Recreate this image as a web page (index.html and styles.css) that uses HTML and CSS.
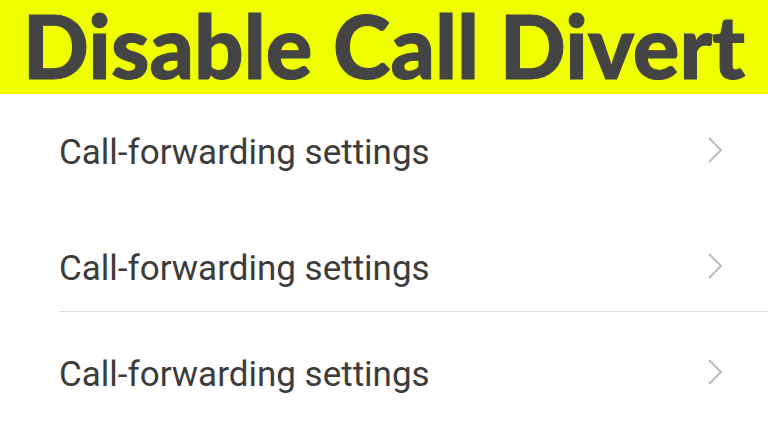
FILE: index.html
```html
<!DOCTYPE html>
<html lang="en">
<head>
    <meta charset="UTF-8">
    <meta name="viewport" content="width=device-width, initial-scale=1.0">
    <title>Disable Call Divert</title>
    <link rel="stylesheet" href="styles.css">
</head>
<body>
    <header class="banner">
        <h1>Disable Call Divert</h1>
    </header>
    <main class="settings">
        <a class="row row-first" href="#voice">
            <span>Call-forwarding settings</span>
            <svg class="chevron" viewBox="0 0 16 28" aria-hidden="true"><path d="M2 2 14 14 2 26"/></svg>
        </a>
        <a class="row row-line" href="#video">
            <span>Call-forwarding settings</span>
            <svg class="chevron" viewBox="0 0 16 28" aria-hidden="true"><path d="M2 2 14 14 2 26"/></svg>
        </a>
        <a class="row" href="#data">
            <span>Call-forwarding settings</span>
            <svg class="chevron" viewBox="0 0 16 28" aria-hidden="true"><path d="M2 2 14 14 2 26"/></svg>
        </a>
    </main>
</body>
</html>
```
FILE: styles.css
```css
* {
    margin: 0;
    padding: 0;
    box-sizing: border-box;
}

body {
    background-color: #ffffff;
    font-family: Roboto, "Liberation Sans", sans-serif;
    color: #3c3c3c;
}

.banner {
    background-color: #f0ff00;
    padding-bottom: 2px;
    text-align: center;
}

.banner h1 {
    font-family: Lato, sans-serif;
    font-weight: 900;
    font-size: 87px;
    line-height: 92px;
    color: #444444;
    -webkit-text-stroke: 1px #444444;
    white-space: nowrap;
}

.settings {
    padding-left: 59px;
}

.row {
    display: flex;
    align-items: center;
    justify-content: space-between;
    padding: 41px 45px 40px 0;
    font-size: 35px;
    line-height: 44px;
    color: inherit;
    text-decoration: none;
}

.row-first {
    padding-top: 37px;
    padding-bottom: 31px;
}

.row-line {
    padding-bottom: 20px;
    border-bottom: 1px solid #dddddd;
}

.chevron {
    width: 16px;
    height: 28px;
    margin-bottom: 6px;
    fill: none;
    stroke: #bcbcbc;
    stroke-width: 2;
}
```
